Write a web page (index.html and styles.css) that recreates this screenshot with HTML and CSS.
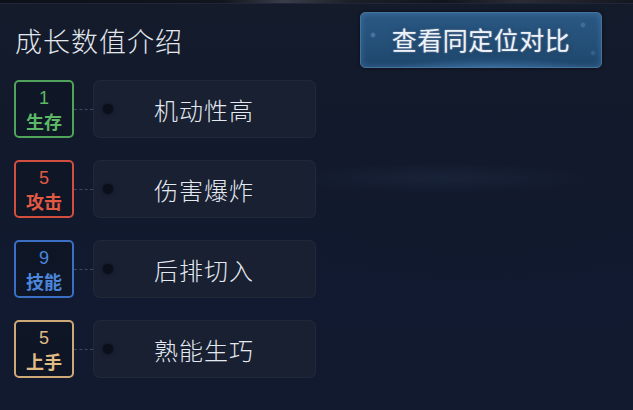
FILE: index.html
```html
<!DOCTYPE html>
<html lang="zh">
<head>
<meta charset="utf-8">
<title>成长数值介绍</title>
<link rel="stylesheet" href="styles.css">
</head>
<body>
<div class="panel">
  <div class="strip"></div>
  <header class="head">
    <h1 class="title">成长数值介绍</h1>
    <button class="compare">查看同定位对比</button>
  </header>
  <ul class="stats">
    <li class="row">
      <div class="badge green"><span class="num">1</span><span class="label">生存</span></div>
      <div class="link"></div>
      <div class="card"><span class="dot"></span><span class="text">机动性高</span></div>
    </li>
    <li class="row">
      <div class="badge red"><span class="num">5</span><span class="label">攻击</span></div>
      <div class="link"></div>
      <div class="card"><span class="dot"></span><span class="text">伤害爆炸</span></div>
    </li>
    <li class="row">
      <div class="badge blue"><span class="num">9</span><span class="label">技能</span></div>
      <div class="link"></div>
      <div class="card"><span class="dot"></span><span class="text">后排切入</span></div>
    </li>
    <li class="row">
      <div class="badge gold"><span class="num">5</span><span class="label">上手</span></div>
      <div class="link"></div>
      <div class="card"><span class="dot"></span><span class="text">熟能生巧</span></div>
    </li>
  </ul>
</div>
</body>
</html>
```

FILE: styles.css
```css
* { box-sizing: border-box; }

html, body {
  margin: 0;
  padding: 0;
  width: 633px;
  height: 410px;
  overflow: hidden;
  background: #121a2b;
  font-family: "Noto Sans CJK SC", "Noto Sans", sans-serif;
}

.panel {
  width: 633px;
  height: 410px;
  background:
    radial-gradient(ellipse 220px 22px at 440px 178px, rgba(60, 82, 115, 0.16), transparent 70%),
    radial-gradient(ellipse 300px 60px at 480px 250px, rgba(16, 24, 42, 0.35), transparent 70%),
    linear-gradient(180deg, #141b2b 0%, #12192c 40%, #111a30 70%, #111a2e 100%);
}

.strip {
  height: 4px;
  background: linear-gradient(90deg, #0d1018 0%, #12151e 35%, #3a3d48 45%, #1e2029 55%, #12151e 70%, #2a2b33 82%, #15171f 100%);
  border-bottom: 1px solid #1f2636;
}

.head {
  height: 72px;
  display: flex;
  align-items: center;
  justify-content: space-between;
  padding: 0 31px 0 15px;
}

.title {
  margin: 0;
  font-family: "Noto Sans CJK SC Light", "Noto Sans CJK SC DemiLight", "Noto Sans CJK SC", sans-serif;
  font-size: 27px;
  font-weight: 300;
  color: #e3e7ee;
  letter-spacing: 1px;
}

.compare {
  width: 242px;
  height: 56px;
  border: 1px solid #44729b;
  border-radius: 5px;
  background:
    radial-gradient(circle at 12px 22px, rgba(150, 200, 255, 0.3) 0 1.5px, transparent 3px),
    radial-gradient(circle at 222px 12px, rgba(150, 200, 255, 0.22) 0 1.5px, transparent 3px),
    radial-gradient(circle at 232px 40px, rgba(150, 200, 255, 0.18) 0 1px, transparent 3px),
    radial-gradient(ellipse 120px 14px at 130px 56px, rgba(90, 160, 220, 0.35), transparent 80%),
    linear-gradient(180deg, #2a5884 0%, #245078 55%, #1f466d 100%);
  box-shadow: inset 0 0 6px rgba(120, 180, 235, 0.3), 0 0 4px rgba(0, 0, 0, 0.5);
  color: #eef3fa;
  font-family: inherit;
  font-size: 25px;
  font-weight: 400;
  letter-spacing: 0.5px;
  text-shadow: 0 0 2px rgba(220, 235, 255, 0.6), 0 0 4px rgba(20, 40, 70, 0.8);
  padding: 0 0 2px;
}

.stats {
  list-style: none;
  margin: 0;
  padding: 4px 0 0 14px;
  display: flex;
  flex-direction: column;
  gap: 22px;
}

.row {
  display: flex;
  align-items: center;
  height: 58px;
}

.badge {
  width: 60px;
  height: 58px;
  border: 2px solid;
  border-radius: 5px;
  display: flex;
  flex-direction: column;
  align-items: center;
  justify-content: flex-start;
  padding-top: 6px;
  background: rgba(14, 20, 34, 0.6);
}

.num {
  font-family: "Liberation Sans", sans-serif;
  font-size: 18px;
  line-height: 21px;
}

.label {
  font-size: 18px;
  font-weight: 700;
  line-height: 26px;
  margin-top: -1px;
}

.green { border-color: #4fa35a; color: #5cb866; }
.red { border-color: #d24e3e; color: #e25a44; }
.blue { border-color: #3a6fc4; color: #4b86da; }
.gold { border-color: #cfa877; color: #e0bb84; }

.link {
  width: 19px;
  height: 0;
  border-top: 1px dashed rgba(110, 130, 160, 0.45);
}

.card {
  width: 223px;
  height: 58px;
  border-radius: 7px;
  background: #182032;
  border: 1px solid rgba(255, 255, 255, 0.04);
  display: flex;
  align-items: center;
  padding-left: 9px;
}

.dot {
  width: 10px;
  height: 10px;
  border-radius: 50%;
  background: #0a0f1a;
  box-shadow: 0 0 3px #0a0f1a;
  flex: none;
}

.text {
  flex: 1;
  text-align: center;
  margin-right: 20px;
  font-family: "Noto Sans CJK SC Light", "Noto Sans CJK SC DemiLight", "Noto Sans CJK SC", sans-serif;
  font-size: 24px;
  font-weight: 300;
  color: #e4e8ef;
  letter-spacing: 1px;
}
```
